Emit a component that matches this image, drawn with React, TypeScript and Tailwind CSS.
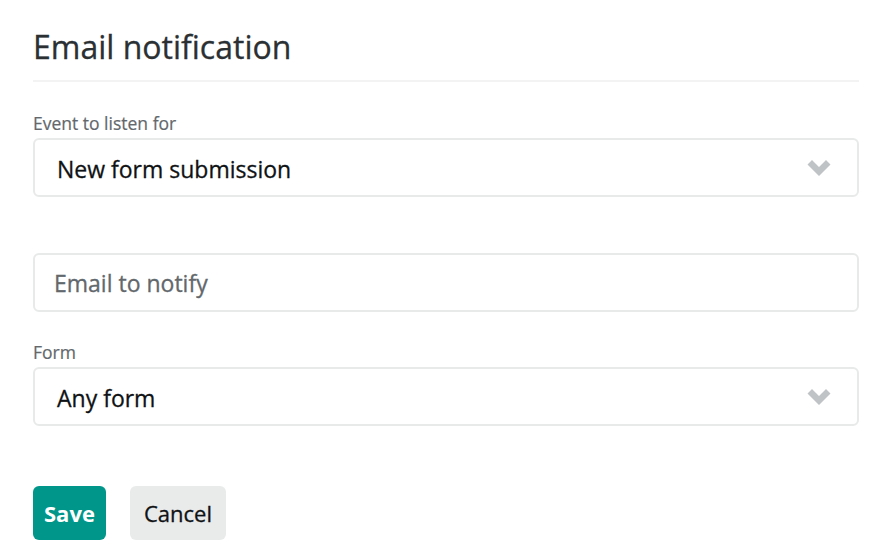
import React from 'react';

const Chevron: React.FC = () => (
  <svg width="26" height="16" viewBox="0 0 26 16" className="shrink-0">
    <path d="M1.5 4.5 L6 0 L13 7 L20 0 L24.5 4.5 L13 16 Z" fill="#bfc3c6" />
  </svg>
);

const SelectBox: React.FC<{ value: string }> = ({ value }) => (
  <div className="flex items-center justify-between h-[59px] rounded-[6px] border-2 border-[#e8e9e9] bg-white pl-[22px] pr-[25px]">
    <span className="pt-[4px] text-[23px] text-[#0f1214] [-webkit-text-stroke:0.3px_#0f1214]">{value}</span>
    <Chevron />
  </div>
);

export default function App() {
  return (
    <div className="min-h-screen bg-white pl-[33px] pr-[23px] pt-[24px] font-['Open_Sans',sans-serif]">
      <h1 className="text-[32px] leading-[46px] text-[#2b3033] [-webkit-text-stroke:0.3px_#2b3033] pb-[10px] border-b-2 border-[#f3f3f3]">
        Email notification
      </h1>

      <div className="mt-[30px]">
        <label className="block text-[17.5px] leading-[22px] text-[#62686c] [-webkit-text-stroke:0.2px_#62686c] mb-[4px]">Event to listen for</label>
        <SelectBox value="New form submission" />
      </div>

      <div className="mt-[56px]">
        <div className="flex items-center h-[59px] rounded-[6px] border-2 border-[#e8e9e9] bg-white px-[19px]">
          <span className="pt-[2px] text-[23px] text-[#62686c] [-webkit-text-stroke:0.3px_#62686c]">Email to notify</span>
        </div>
      </div>

      <div className="mt-[29px]">
        <label className="block text-[17.5px] leading-[22px] text-[#62686c] [-webkit-text-stroke:0.2px_#62686c] mb-[4px]">Form</label>
        <SelectBox value="Any form" />
      </div>

      <div className="flex gap-[24px] mt-[60px]">
        <button className="h-[54px] px-[11px] rounded-[6px] bg-[#00968a] text-white text-[22px] font-bold">Save</button>
        <button className="h-[54px] px-[14px] rounded-[6px] bg-[#e9eaea] text-[#0f1214] [-webkit-text-stroke:0.3px_#0f1214] text-[22px]">Cancel</button>
      </div>
    </div>
  );
}
